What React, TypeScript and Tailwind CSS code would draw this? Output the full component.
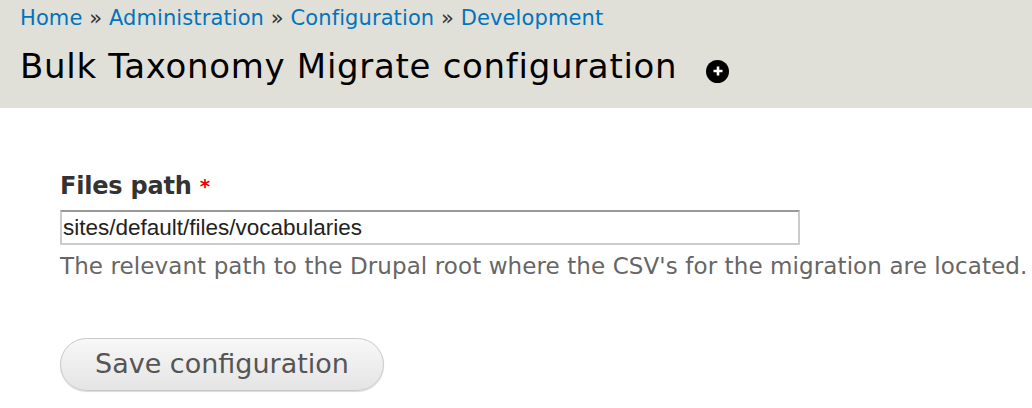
export default function App() {
  const font = { fontFamily: '"DejaVu Sans", "Noto Sans", sans-serif' };
  return (
    <div className="w-[1032px] h-[408px] bg-white overflow-hidden" style={font}>
      <div className="bg-[#e0e0d8] h-[108px] px-[20px] pt-[4px]">
        <div className="text-[21px] leading-[28px] text-[#0074bd] tracking-[0.1px] whitespace-nowrap">
          <a>Home</a> <span className="text-[#333]">»</span> <a>Administration</a>{" "}
          <span className="text-[#333]">»</span> <a>Configuration</a>{" "}
          <span className="text-[#333]">»</span> <a>Development</a>
        </div>
        <div className="flex items-center mt-[12px]">
          <h1 className="text-[34px] leading-[44px] text-black tracking-[0.7px] font-normal whitespace-nowrap">
            Bulk Taxonomy Migrate configuration
          </h1>
          <span className="ml-[29px] mt-[10px] w-[23px] h-[23px] rounded-full bg-black flex items-center justify-center">
            <svg width="12" height="12" viewBox="0 0 12 12">
              <path d="M6 1.5v9M1.5 6h9" stroke="white" strokeWidth="2.6" />
            </svg>
          </span>
        </div>
      </div>
      <div className="pl-[60px] pt-[63px]">
        <label className="block text-[24px] leading-[30px] font-bold text-[#333] tracking-[-0.2px]">
          Files path <span className="text-[#e00] text-[20px] align-top">*</span>
        </label>
        <div className="mt-[9px] w-[740px] h-[35px] border-2 border-[#ccc] border-t-[#999] flex items-center px-[1px]">
          <span
            className="text-[22.5px] text-[#222]"
            style={{ fontFamily: '"Liberation Sans", Arial, sans-serif' }}
          >
            sites/default/files/vocabularies
          </span>
        </div>
        <p className="mt-[5px] text-[23px] leading-[32px] text-[#666] whitespace-nowrap tracking-[0.1px]">
          The relevant path to the Drupal root where the CSV's for the migration are located.
        </p>
        <button className="mt-[56px] w-[324px] h-[53px] rounded-full border border-[#c8c8c8] bg-gradient-to-b from-[#f8f8f8] to-[#e4e4e4] text-[27px] text-[#555] shadow-[0_1px_1px_rgba(0,0,0,0.15)]">
          Save configuration
        </button>
      </div>
    </div>
  );
}
